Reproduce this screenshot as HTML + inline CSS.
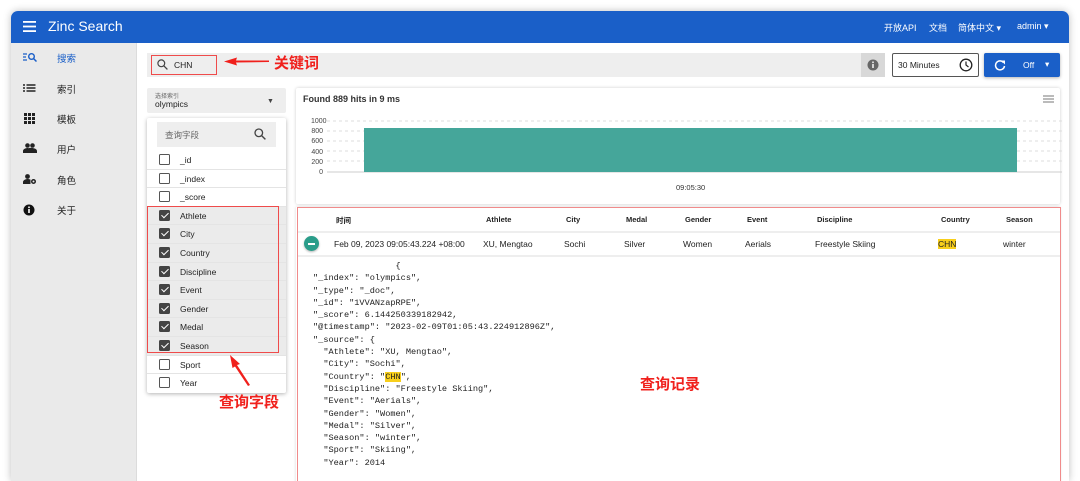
<!DOCTYPE html>
<html><head><meta charset="utf-8"><style>
*{box-sizing:border-box;margin:0;padding:0}
body{width:1080px;height:466px;overflow:hidden;background:#fff;font-family:"Liberation Sans","Noto Sans CJK SC",sans-serif;color:#222;position:relative}
.a{position:absolute}
.win{left:11px;top:11px;width:1058px;height:470px;border-radius:7px 7px 0 0;overflow:hidden;box-shadow:0 0 8px rgba(0,0,0,.25);background:#fff}
.hdr{left:0;top:0;width:1058px;height:32px;background:#1a5fc8;color:#fff}
.side{left:0;top:32px;width:126px;height:440px;background:#eaeaea;border-right:1px solid #dcdcdc}
.nav{left:0;width:126px;height:20px;font-size:9.5px;color:#222}
.nav span{position:absolute;left:46px;top:4px}
.nav svg{position:absolute;left:12px;top:5px}
.t{font-size:8px}
.row{left:136px;width:139px;height:18.6px;border-bottom:1px solid #e4e4e4;font-size:8.5px}
.row .cb{position:absolute;left:12px;top:3px;width:11px;height:11px;border:1.5px solid #555;border-radius:1.5px}
.row.on{background:#ebebeb}
.row.on .cb{background:#444;border-color:#444}
.row.on .cb:after{content:"";position:absolute;left:2.5px;top:0px;width:3px;height:6px;border:solid #fff;border-width:0 1.5px 1.5px 0;transform:rotate(45deg)}
.row b{font-weight:normal;position:absolute;left:33px;top:4px}
.th{font-size:7.5px;font-weight:bold;top:215px}
.td{font-size:8.5px;top:239px}
pre{font-family:"Liberation Mono",monospace;font-size:8.6px;line-height:12.3px;color:#222}
.red{color:#f0201c;font-size:15px;font-weight:bold}
</style></head><body>
<div class="a win">
 <div class="a hdr">
  <svg class="a" style="left:12px;top:10px" width="13" height="11"><rect y="0" width="13" height="1.8" fill="#fff"/><rect y="4.6" width="13" height="1.8" fill="#fff"/><rect y="9.2" width="13" height="1.8" fill="#fff"/></svg>
  <div class="a" style="left:37px;top:7px;font-size:14px">Zinc Search</div>
  <div class="a" style="left:873px;top:10px;font-size:9px">开放API</div>
  <div class="a" style="left:918px;top:10px;font-size:9px">文档</div>
  <div class="a" style="left:947px;top:10px;font-size:9px">简体中文 ▾</div>
  <div class="a" style="left:1006px;top:10px;font-size:9px">admin ▾</div>
 </div>
 <div class="a side">
  <div class="a nav" style="top:4px"><svg width="14" height="10"><path d="M0 2h4M0 5h3M0 8h4" stroke="#1a5fc8" stroke-width="1.3"/><circle cx="8.5" cy="4.5" r="2.8" fill="none" stroke="#1a5fc8" stroke-width="1.4"/><path d="M10.5 6.5l3 3" stroke="#1a5fc8" stroke-width="1.5"/></svg><span style="color:#1a5fc8">搜索</span></div>
  <div class="a nav" style="top:35px"><svg width="14" height="10"><path d="M0 2h2M0 5h2M0 8h2M3.5 2h9M3.5 5h9M3.5 8h9" stroke="#222" stroke-width="1.6"/></svg><span>索引</span></div>
  <div class="a nav" style="top:65px"><svg width="14" height="11"><g fill="#222"><rect x="1" y="0" width="3" height="3"/><rect x="5" y="0" width="3" height="3"/><rect x="9" y="0" width="3" height="3"/><rect x="1" y="4" width="3" height="3"/><rect x="5" y="4" width="3" height="3"/><rect x="9" y="4" width="3" height="3"/><rect x="1" y="8" width="3" height="3"/><rect x="5" y="8" width="3" height="3"/><rect x="9" y="8" width="3" height="3"/></g></svg><span>模板</span></div>
  <div class="a nav" style="top:95px"><svg width="14" height="10"><g fill="#222"><circle cx="4.5" cy="2.5" r="2.3"/><circle cx="9.5" cy="2.5" r="2.3"/><path d="M0 10v-2c0-2 3-3 4.5-3s4.5 1 4.5 3v2zM7 10v-2c0-1 0-2-1-3 2-.3 8 0 8 3v2z"/></g></svg><span>用户</span></div>
  <div class="a nav" style="top:126px"><svg width="14" height="11"><g fill="#222"><circle cx="4.5" cy="2.5" r="2.4"/><path d="M0 10v-2c0-2 3-3 4.5-3 1 0 2 .2 3 .6v4.4z"/><circle cx="10.5" cy="7.5" r="2.5"/></g><circle cx="10.5" cy="7.5" r="1" fill="#eaeaea"/></svg><span>角色</span></div>
  <div class="a nav" style="top:156px"><svg width="14" height="12"><circle cx="6" cy="6" r="5.5" fill="#111"/><rect x="5.2" y="5" width="1.6" height="4" fill="#fff"/><rect x="5.2" y="2.5" width="1.6" height="1.6" fill="#fff"/></svg><span>关于</span></div>
 </div>
 <div class="a" style="left:136px;top:42px;width:738px;height:24px;background:#eee"></div>
 <div class="a" style="left:850px;top:42px;width:24px;height:24px;background:#d8d8d8"><svg class="a" style="left:6px;top:6px" width="12" height="12"><circle cx="6" cy="6" r="5.5" fill="#666"/><rect x="5.2" y="5" width="1.6" height="4" fill="#eee"/><rect x="5.2" y="2.5" width="1.6" height="1.6" fill="#eee"/></svg></div>
 <div class="a" style="left:140px;top:44px;width:66px;height:20px;border:1px solid #ef4b4b"></div>
 <svg class="a" style="left:146px;top:48px" width="11" height="11"><circle cx="4.3" cy="4.3" r="3.4" fill="none" stroke="#444" stroke-width="1.2"/><path d="M6.8 6.8l3.6 3.6" stroke="#444" stroke-width="1.3"/></svg>
 <div class="a" style="left:163px;top:49px;font-size:8.5px">CHN</div>
 <svg class="a" style="left:210px;top:44px" width="60" height="14"><path d="M3 6.5L16 2.5 15 5.5 48 5.5 48 7 15 7.5 16 10.5z" fill="#f0201c"/></svg>
 <div class="a red" style="left:263px;top:41px">关键词</div>
 <div class="a" style="left:881px;top:42px;width:87px;height:24px;border:1px solid #555;border-radius:2px;font-size:8.5px;padding:6px 0 0 5px">30 Minutes</div>
 <svg class="a" style="left:948px;top:47px" width="14" height="14"><circle cx="7" cy="7" r="5.8" fill="none" stroke="#222" stroke-width="1.3"/><path d="M7 3.5V7l2.5 2" fill="none" stroke="#222" stroke-width="1.2"/></svg>
 <div class="a" style="left:973px;top:42px;width:76px;height:24px;background:#1a5fc8;border-radius:2px;color:#fff;font-size:8.5px;box-shadow:0 1px 3px rgba(0,0,0,.3)">
  <svg class="a" style="left:10px;top:6px" width="12" height="12"><path d="M9.5 3.5A4.5 4.5 0 1 0 10.5 7" fill="none" stroke="#fff" stroke-width="1.5"/><path d="M7 1.5h4v4z" fill="#fff"/></svg>
  <span class="a" style="left:39px;top:7px">Off</span><span class="a" style="left:61px;top:6px">▾</span></div>
 <div class="a" style="left:136px;top:77px;width:139px;height:25px;background:#eee;border-radius:2px"></div>
 <div class="a" style="left:144px;top:80px;font-size:6px;color:#666">选择索引</div>
 <div class="a" style="left:144px;top:88px;font-size:8.5px">olympics</div>
 <div class="a" style="left:256px;top:87px;font-size:7px;color:#444">▼</div>
 <div class="a" style="left:136px;top:107px;width:139px;height:275px;background:#fff;box-shadow:0 1px 4px rgba(0,0,0,.3);border-radius:2px"></div>
 <div class="a" style="left:146px;top:111px;width:119px;height:25px;background:#eee"></div>
 <div class="a" style="left:154px;top:118px;font-size:8.5px;color:#666">查询字段</div>
 <svg class="a" style="left:243px;top:117px" width="12" height="12"><circle cx="4.8" cy="4.8" r="3.8" fill="none" stroke="#444" stroke-width="1.3"/><path d="M7.6 7.6l3.8 3.8" stroke="#444" stroke-width="1.4"/></svg>
 <div class="a row" style="top:140px"><i class="cb"></i><b>_id</b></div>
 <div class="a row" style="top:158.6px"><i class="cb"></i><b>_index</b></div>
 <div class="a row" style="top:177.2px"><i class="cb"></i><b>_score</b></div>
 <div class="a row on" style="top:195.8px"><i class="cb"></i><b>Athlete</b></div>
 <div class="a row on" style="top:214.4px"><i class="cb"></i><b>City</b></div>
 <div class="a row on" style="top:233px"><i class="cb"></i><b>Country</b></div>
 <div class="a row on" style="top:251.6px"><i class="cb"></i><b>Discipline</b></div>
 <div class="a row on" style="top:270.2px"><i class="cb"></i><b>Event</b></div>
 <div class="a row on" style="top:288.8px"><i class="cb"></i><b>Gender</b></div>
 <div class="a row on" style="top:307.4px"><i class="cb"></i><b>Medal</b></div>
 <div class="a row on" style="top:326px"><i class="cb"></i><b>Season</b></div>
 <div class="a row" style="top:344.6px"><i class="cb"></i><b>Sport</b></div>
 <div class="a row" style="top:363.2px;border:none"><i class="cb"></i><b>Year</b></div>
 <div class="a" style="left:136px;top:195px;width:132px;height:147px;border:1px solid #ef4b4b"></div>
 <svg class="a" style="left:215px;top:342px" width="30" height="36"><path d="M4 2L14 11 11 12 24 32 22 33 9 13.5 6.5 15z" fill="#f0201c"/></svg>
 <div class="a red" style="left:208px;top:380px">查询字段</div>
 <div class="a" style="left:285px;top:77px;width:764px;height:116px;background:#fff;box-shadow:0 0 3px rgba(0,0,0,.2);border-radius:2px"></div>
 <div class="a" style="left:292px;top:83px;font-size:9px;font-weight:bold;color:#333">Found 889 hits in 9 ms</div>
 <svg class="a" style="left:1032px;top:84px" width="11" height="8"><path d="M0 1h11M0 4h11M0 7h11" stroke="#777" stroke-width="1.1"/></svg>
 <div class="a t" style="left:300px;top:106px;width:12px;text-align:right;line-height:10.2px;font-size:7px;color:#444">1000<br>800<br>600<br>400<br>200<br>0</div>
 <svg class="a" style="left:316px;top:108px" width="735" height="58"><g stroke="#ddd" stroke-dasharray="3 3"><path d="M0 2h735M0 12h735M0 22h735M0 32h735M0 42h735"/></g><path d="M0 53h735" stroke="#ccc"/><rect x="37" y="9" width="653" height="44" fill="#45a69a"/></svg>
 <div class="a" style="left:665px;top:172px;font-size:7.5px;color:#333">09:05:30</div>
 <div class="a" style="left:285px;top:196px;width:764px;height:280px;background:#fff;box-shadow:0 0 3px rgba(0,0,0,.15)"></div>
 <div class="a" style="left:286px;top:196px;width:764px;height:280px;border:1px solid #f08b8b"></div>
 <div class="a" style="left:287px;top:220px;width:762px;height:2px;background:#eee"></div>
 <div class="a" style="left:287px;top:244px;width:762px;height:2px;background:#eee"></div>
</div>
<div class="a th" style="left:336px">时间</div>
<div class="a th" style="left:486px">Athlete</div>
<div class="a th" style="left:566px">City</div>
<div class="a th" style="left:626px">Medal</div>
<div class="a th" style="left:685px">Gender</div>
<div class="a th" style="left:747px">Event</div>
<div class="a th" style="left:817px">Discipline</div>
<div class="a th" style="left:941px">Country</div>
<div class="a th" style="left:1006px">Season</div>
<div class="a" style="left:304px;top:236px;width:15px;height:15px;border-radius:50%;background:#2a9d8a;box-shadow:0 1px 2px rgba(0,0,0,.3)"><div class="a" style="left:4px;top:6.5px;width:7px;height:2px;background:#fff"></div></div>
<div class="a td" style="left:334px">Feb 09, 2023 09:05:43.224 +08:00</div>
<div class="a td" style="left:483px">XU, Mengtao</div>
<div class="a td" style="left:564px">Sochi</div>
<div class="a td" style="left:624px">Silver</div>
<div class="a td" style="left:683px">Women</div>
<div class="a td" style="left:745px">Aerials</div>
<div class="a td" style="left:815px">Freestyle Skiing</div>
<div class="a td" style="left:938px;background:#f8cf1b">CHN</div>
<div class="a td" style="left:1003px">winter</div>
<pre class="a" style="left:313px;top:260px">                {
"_index": "olympics",
"_type": "_doc",
"_id": "1VVANzapRPE",
"_score": 6.144250339182942,
"@timestamp": "2023-02-09T01:05:43.224912896Z",
"_source": {
  "Athlete": "XU, Mengtao",
  "City": "Sochi",
  "Country": "<span style="background:#f8cf1b">CHN</span>",
  "Discipline": "Freestyle Skiing",
  "Event": "Aerials",
  "Gender": "Women",
  "Medal": "Silver",
  "Season": "winter",
  "Sport": "Skiing",
  "Year": 2014</pre>
<div class="a red" style="left:640px;top:373px">查询记录</div>
</body></html>
